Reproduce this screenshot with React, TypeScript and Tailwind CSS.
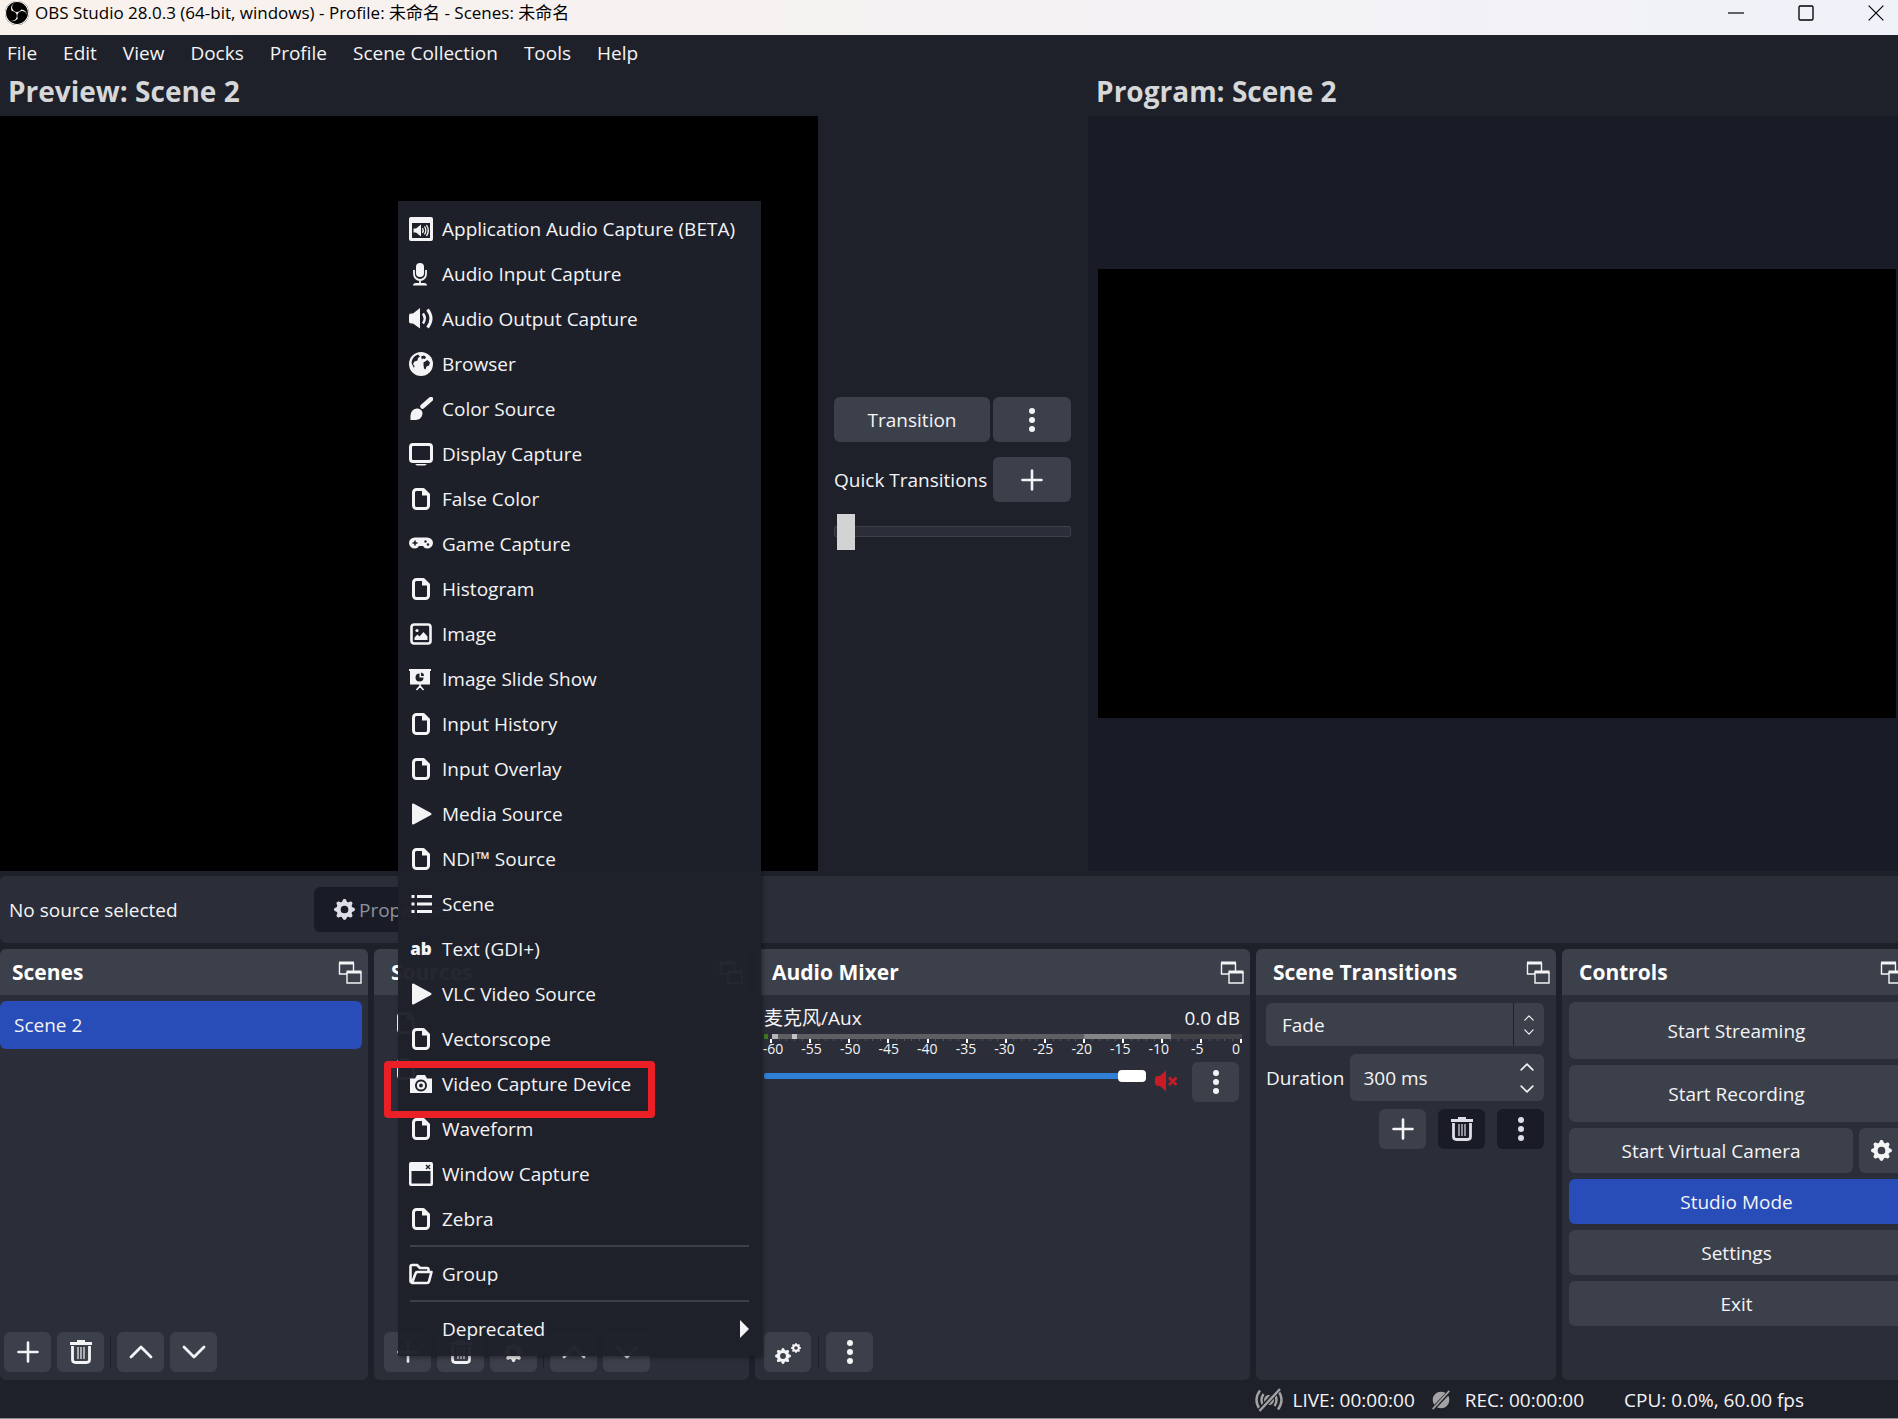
import type { ReactNode } from 'react'
import { BsGearFill } from 'react-icons/bs'
import { SiObsstudio } from 'react-icons/si'

const menus = ['File', 'Edit', 'View', 'Docks', 'Profile', 'Scene Collection', 'Tools', 'Help']

type IconProps = { children: ReactNode; className?: string }

function Icon({ children, className = 'size-6' }: IconProps) {
  return (
    <svg viewBox="0 0 24 24" className={`shrink-0 ${className}`} fill="none" stroke="currentColor" aria-hidden="true">
      {children}
    </svg>
  )
}

const FileIcon = () => (
  <Icon>
    <path d="M7.500 2.500H14.500L19.500 7.500V18.500a3 3 0 0 1-3 3H7.500a3 3 0 0 1-3-3V5.500a3 3 0 0 1 3-3z" strokeWidth="3" strokeLinejoin="round" />
    <path d="M13 2.500V8.500H20L14.500 2.500z" fill="currentColor" stroke="none" />
  </Icon>
)

const PlayIcon = () => (
  <Icon>
    <path d="M4 2.500v19L21.500 12z" fill="currentColor" strokeWidth="2" strokeLinejoin="round" />
  </Icon>
)

const AppAudioIcon = () => (
  <Icon>
    <path d="M2 0h20a2 2 0 0 1 2 2v20a2 2 0 0 1-2 2H2a2 2 0 0 1-2-2V2a2 2 0 0 1 2-2zM3 6v15h18V6z" fill="currentColor" fillRule="evenodd" stroke="none" />
    <path d="M4.500 11.500H7l5-4v12l-5-4H4.500z" fill="currentColor" stroke="none" />
    <path d="M13.500 11q1.500 2.500 0 5M15.500 9.300q2.700 4 0 8.200M17.500 8q3.500 5.500 0 11" strokeWidth="1.300" />
  </Icon>
)

const MicIcon = () => (
  <Icon>
    <rect x="7" y="1" width="8" height="14" rx="4" fill="currentColor" stroke="none" />
    <path d="M5 8v4a6 6 0 0 0 12 0V8M11 18v4" strokeWidth="1.800" />
    <path d="M4 23.500q0-2.500 3-2.500h8q3 0 3 2.500z" fill="currentColor" stroke="none" />
  </Icon>
)

const SpeakerIcon = () => (
  <Icon>
    <path d="M11 1v20.500L4 16.500H2q-2 0-2-2v-6q0-2 2-2h2z" fill="currentColor" stroke="none" />
    <path d="M14 6.500q3.500 5 0 10" strokeWidth="2.500" />
    <path d="M18.500 2.500q7 9 0 18" strokeWidth="3" />
  </Icon>
)

const GlobeIcon = () => (
  <Icon>
    <circle cx="12" cy="12" r="12" fill="currentColor" stroke="none" />
    <path d="M9 2.500q-6 2-6.500 8.500l1.500 3 1 2 .5-2-1.500-2 1.500-2.500 3-1 .5-2.500 2-1.500zM12 4.500l3-1 2 1.500-1 2-2-.5-1 1zM14.500 10.500l4-2.500 2.500 2.500-1 3-2.500 1-1 3-1.500-1-.5-3.500z" fill="#1f212a" stroke="none" />
  </Icon>
)

const BrushIcon = () => (
  <Icon>
    <path d="M22 2L13.500 9.500" strokeWidth="4.500" strokeLinecap="round" />
    <path d="M1.500 23q-.5-6 1.500-9t6-2.500q4.500 1 4.500 5-.5 6-7 6.500z" fill="currentColor" stroke="none" />
  </Icon>
)

const DisplayIcon = () => (
  <Icon>
    <rect x="1.500" y="2.500" width="21" height="17" rx="2.500" strokeWidth="3" />
    <path d="M6 22h12l-2 1.500H8z" fill="currentColor" stroke="none" />
  </Icon>
)

const GamepadIcon = () => (
  <Icon>
    <path d="M6 5.500h12a6 5.500 0 0 1 0 11q-2.500 0-4-2.500h-4q-1.500 2.500-4 2.500a6 5.500 0 0 1 0-11z" fill="currentColor" stroke="none" />
    <path d="M3.500 11h5M6 8.500v5" stroke="#1f212a" strokeWidth="1.600" />
    <circle cx="16.500" cy="9.500" r="1.200" fill="#1f212a" stroke="none" />
    <circle cx="19" cy="12.500" r="1.200" fill="#1f212a" stroke="none" />
  </Icon>
)

const ImageIcon = () => (
  <Icon>
    <rect x="2.500" y="2.500" width="19" height="19" rx="2.500" strokeWidth="2.600" />
    <circle cx="8" cy="8.500" r="1.600" fill="currentColor" stroke="none" />
    <path d="M5.500 18v-2.500l3-3 2 2 4-4.500 4 4.500V18z" fill="currentColor" stroke="none" />
  </Icon>
)

const SlidesIcon = () => (
  <Icon>
    <path d="M0 2h22v2h-1v13.500H1V4H0z" fill="currentColor" stroke="none" />
    <path d="M11 17v3M11 19l-3.500 4M11 19l3.500 4" strokeWidth="1.600" />
    <path d="M10.500 6.500v4h4a4 4 0 1 1-4-4z" fill="#1f212a" stroke="none" />
    <path d="M12 5.500a3.500 3.500 0 0 1 3 3.500h-3z" fill="#1f212a" stroke="none" />
  </Icon>
)

const ListIcon = () => (
  <Icon>
    <path d="M2.500 4.500h3M2.500 12h3M2.500 19.500h3M8 4.500h15M8 12h15M8 19.500h15" strokeWidth="3" />
  </Icon>
)

const CameraIcon = () => (
  <Icon>
    <path d="M1 6.500h5L8 3h8l2 3.500h5V21H1zM12 7.500a6 6 0 1 0 .01 0z" fill="currentColor" fillRule="evenodd" stroke="none" />
    <circle cx="12" cy="13.500" r="3" strokeWidth="2.200" />
  </Icon>
)

const WindowIcon = () => (
  <Icon>
    <path d="M2 0h20a2 2 0 0 1 2 2v20a2 2 0 0 1-2 2H2a2 2 0 0 1-2-2V2a2 2 0 0 1 2-2zM2.500 9v12.500h19V9z" fill="currentColor" fillRule="evenodd" stroke="none" />
    <path d="M17 3l4 4M21 3l-4 4" stroke="#1f212a" strokeWidth="1.400" />
  </Icon>
)

const FolderIcon = () => (
  <Icon>
    <path d="M3 20.500a1.500 1.500 0 0 1-1.500-1.500V4.500A1.500 1.500 0 0 1 3 3h5l3 3h7a1.500 1.500 0 0 1 1.500 1.500V10M3 21L6.500 11.500q.5-1.500 2-1.500H22.500L20 19.500q-.5 1.500-2 1.500z" strokeWidth="2.600" strokeLinejoin="round" />
  </Icon>
)

const PlusIcon = () => (
  <Icon>
    <path d="M12 2.500v19M2.500 12h19" strokeWidth="2.600" strokeLinecap="round" />
  </Icon>
)

const TrashIcon = () => (
  <Icon>
    <path d="M1 3.500h22M8 1.500h8" strokeWidth="2.800" />
    <path d="M3.500 6v13.500q0 3 3 3h11q3 0 3-3V6" strokeWidth="2.800" />
    <path d="M9 7v12M12 7v12M15 7v12" strokeWidth="1.200" />
  </Icon>
)

const UpIcon = ({ className }: { className?: string }) => (
  <Icon className={className}>
    <path d="M2 17L12 7l10 10" strokeWidth="2.800" strokeLinecap="round" strokeLinejoin="round" />
  </Icon>
)

const DownIcon = ({ className }: { className?: string }) => (
  <Icon className={className}>
    <path d="M2 7l10 10L22 7" strokeWidth="2.800" strokeLinecap="round" strokeLinejoin="round" />
  </Icon>
)

const DotsIcon = () => (
  <Icon>
    <g fill="currentColor" stroke="none">
      <circle cx="12" cy="3" r="3" />
      <circle cx="12" cy="12" r="3" />
      <circle cx="12" cy="21" r="3" />
    </g>
  </Icon>
)

const PopOutIcon = () => (
  <Icon>
    <path d="M1 3h15M8.500 12h15" strokeWidth="3" />
    <path d="M8.500 14H1.500V3M15.500 3v8M9 12v11h14V12" strokeWidth="1.400" />
  </Icon>
)

const GearsIcon = () => (
  <span className="flex items-center">
    <BsGearFill className="size-4 translate-y-1" />
    <BsGearFill className="size-[10px] -translate-y-1" />
  </span>
)

const MuteIcon = () => (
  <Icon>
    <path d="M12 1.500v21L6 17H4q-3 0-3-3v-4q0-3 3-3h2z" fill="currentColor" stroke="none" />
    <path d="M15 8.500l7.500 7.500M22.500 8.500L15 16" strokeWidth="2.600" />
  </Icon>
)

const LiveIcon = () => (
  <svg viewBox="0 0 28 24" className="h-6 w-7 shrink-0" fill="none" stroke="currentColor" strokeWidth="2.400" aria-hidden="true">
    <circle cx="14" cy="12" r="5" fill="currentColor" stroke="none" />
    <path d="M8.500 6q-4 6 0 12M5 2.500q-7 9.500 0 19M19.500 6q4 6 0 12M23 2.500q7 9.500 0 19" />
    <path d="M24 1L4.500 23" stroke="#1f212a" strokeWidth="5" />
    <path d="M25 1L4.500 23" />
  </svg>
)

const RecIcon = () => (
  <Icon className="size-5">
    <circle cx="12" cy="12" r="10" fill="currentColor" stroke="none" />
    <path d="M23 1L3 22" stroke="#1f212a" strokeWidth="4.500" />
    <path d="M22 1L2 23" strokeWidth="2" />
  </Icon>
)

const sources: { label: string; icon: ReactNode; marked?: boolean }[] = [
  { label: 'Application Audio Capture (BETA)', icon: <AppAudioIcon /> },
  { label: 'Audio Input Capture', icon: <MicIcon /> },
  { label: 'Audio Output Capture', icon: <SpeakerIcon /> },
  { label: 'Browser', icon: <GlobeIcon /> },
  { label: 'Color Source', icon: <BrushIcon /> },
  { label: 'Display Capture', icon: <DisplayIcon /> },
  { label: 'False Color', icon: <FileIcon /> },
  { label: 'Game Capture', icon: <GamepadIcon /> },
  { label: 'Histogram', icon: <FileIcon /> },
  { label: 'Image', icon: <ImageIcon /> },
  { label: 'Image Slide Show', icon: <SlidesIcon /> },
  { label: 'Input History', icon: <FileIcon /> },
  { label: 'Input Overlay', icon: <FileIcon /> },
  { label: 'Media Source', icon: <PlayIcon /> },
  { label: 'NDI™ Source', icon: <FileIcon /> },
  { label: 'Scene', icon: <ListIcon /> },
  { label: 'Text (GDI+)', icon: <span className="text-[17px] font-extrabold leading-6">ab</span> },
  { label: 'VLC Video Source', icon: <PlayIcon /> },
  { label: 'Vectorscope', icon: <FileIcon /> },
  { label: 'Video Capture Device', icon: <CameraIcon />, marked: true },
  { label: 'Waveform', icon: <FileIcon /> },
  { label: 'Window Capture', icon: <WindowIcon /> },
  { label: 'Zebra', icon: <FileIcon /> },
]

function MenuItem({ label, icon, marked, submenu }: { label: string; icon?: ReactNode; marked?: boolean; submenu?: boolean }) {
  return (
    <li className="relative">
      <button className="flex h-[45px] w-full items-center gap-[9px] pl-[11px] pr-3 text-left">
        <span className="flex w-6 justify-center">{icon}</span>
        <span className="flex-1 whitespace-nowrap">{label}</span>
        {submenu && (
          <svg viewBox="0 0 9 18" className="h-[18px] w-[9px]" fill="currentColor" aria-hidden="true">
            <path d="M0 0v18l9-9z" />
          </svg>
        )}
      </button>
      {marked && <span className="pointer-events-none absolute -left-[14px] top-0 z-10 h-[57px] w-[271px] rounded-sm border-[7px] border-[#eb1f26]" />}
    </li>
  )
}

function SourceMenu() {
  return (
    <ul className="absolute left-[398px] top-[201px] z-10 w-[363px] bg-[#1f212a]/97 py-[5px] text-[#f4f4f6] shadow-[2px_2px_4px_rgba(0,0,0,0.35)]">
      {sources.map((s) => (
        <MenuItem key={s.label} {...s} />
      ))}
      <li className="mx-3 my-1 h-[2px] bg-[#3c404b]" />
      <MenuItem label="Group" icon={<FolderIcon />} />
      <li className="mx-3 my-1 h-[2px] bg-[#3c404b]" />
      <MenuItem label="Deprecated" submenu />
    </ul>
  )
}

function Dock({ title, children, titleClass = 'pl-[17px]' }: { title: string; children: ReactNode; titleClass?: string }) {
  return (
    <section className="flex min-w-0 flex-col rounded-md bg-[#2b2d38]">
      <header className={`flex h-[46px] shrink-0 items-center justify-between rounded-t-md bg-[#3c404b] pr-[6px] ${titleClass}`}>
        <h2 className="text-[21px] font-bold text-white">{title}</h2>
        <button aria-label={`Undock ${title}`}>
          <PopOutIcon />
        </button>
      </header>
      {children}
    </section>
  )
}

function ToolButton({ label, children, disabled }: { label: string; children: ReactNode; disabled?: boolean }) {
  return (
    <button
      aria-label={label}
      disabled={disabled}
      className="flex h-10 w-[47px] items-center justify-center rounded-md bg-[#3c404b] disabled:bg-[#191b26] disabled:text-[#dcdde6]"
    >
      {children}
    </button>
  )
}

const Divider = () => <span className="h-8 w-px bg-[#1f212a]" />

const dbLabels = [-60, -55, -50, -45, -40, -35, -30, -25, -20, -15, -10, -5, 0]

function Meter() {
  return (
    <div className="mr-2">
      <div className="flex h-[5px]">
        <span className="w-1 bg-[#3f7a20]" />
        <span className="ml-1 w-[6px] bg-[#b4b4b6]" />
        <span className="w-[14px] bg-[#5f5f63]" />
        <span className="w-[5px] bg-[#c2c2c4]" />
        <span className="flex-[286] bg-[#5f5f63]" />
        <span className="flex-[87] bg-[#858588]" />
        <span className="flex-[71] bg-[#414147]" />
      </div>
      <div className="ml-[6px] flex h-1 justify-between">
        {Array.from({ length: 61 }, (_, i) => (
          <span key={i} className={i % 5 === 0 ? 'h-1 w-[2px] bg-white' : 'h-[2px] w-px bg-[#55565e]'} />
        ))}
      </div>
      <div className="ml-[9px] mr-[6px] flex h-3 justify-between text-sm leading-3">
        {dbLabels.map((db) => (
          <span key={db} className="flex w-0 justify-center">{db}</span>
        ))}
      </div>
    </div>
  )
}

const controlButton = 'rounded-md bg-[#3c404b] text-center'

export default function App() {
  return (
    <div className="relative flex min-h-screen flex-col overflow-hidden border-b border-[#8e8f94] bg-[#1f212a] font-['Open_Sans','Noto_Sans_CJK_SC',sans-serif] text-[19px] leading-7 text-[#f4f4f6]">
      <header className="flex h-[35px] items-start justify-between bg-linear-to-r from-[#f9f1ec] to-[#f0f2f9] text-black">
        <h1 className="flex h-[25px] items-center gap-[6px] pl-[5px] text-[17px]">
          <span className="rounded-full bg-black text-[#f9f1ec]">
            <SiObsstudio className="size-6" />
          </span>
          OBS Studio 28.0.3 (64-bit, windows) - Profile: 未命名 - Scenes: 未命名
        </h1>
        <div className="flex h-[26px] items-center gap-[54px] pr-[14px]">
          <button aria-label="Minimize">
            <Icon className="size-4"><path d="M0 12h24" strokeWidth="1.800" /></Icon>
          </button>
          <button aria-label="Maximize">
            <Icon className="size-4"><rect x="1.500" y="1.500" width="21" height="21" rx="2" strokeWidth="2" /></Icon>
          </button>
          <button aria-label="Close">
            <Icon className="size-4"><path d="M1 1l22 22M23 1L1 23" strokeWidth="1.800" /></Icon>
          </button>
        </div>
      </header>

      <nav className="flex h-9 items-center gap-[26px] pl-[7px]">
        {menus.map((m) => (
          <button key={m}>{m}</button>
        ))}
      </nav>

      <main className="grid flex-1 grid-cols-[101fr_270px_100fr]">
        <section className="flex flex-col">
          <h2 className="flex h-[45px] items-center pb-[6px] pl-2 text-[28px] font-bold text-[#d6d7d8]">Preview: Scene 2</h2>
          <div className="flex-1 bg-black" />
        </section>

        <section className="flex flex-col justify-center px-4 pb-2">
          <div className="flex flex-col gap-[15px]">
            <div className="flex gap-[3px]">
              <button className="h-[45px] w-[156px] rounded-md bg-[#3c404b]">Transition</button>
              <button aria-label="Transition options" className="flex h-[45px] w-[78px] items-center justify-center rounded-md bg-[#3c404b]">
                <DotsIcon />
              </button>
            </div>
            <div className="flex items-center gap-[3px]">
              <span className="w-[156px] whitespace-nowrap">Quick Transitions</span>
              <button aria-label="Add quick transition" className="flex h-[45px] w-[78px] items-center justify-center rounded-md bg-[#3c404b]">
                <PlusIcon />
              </button>
            </div>
          </div>
          <input
            type="range"
            aria-label="Transition position"
            defaultValue={0}
            className="mt-6 h-[11px] w-[237px] appearance-none rounded-xs border border-[#3c404b] bg-[#2b2d38] px-[2px] [&::-webkit-slider-thumb]:h-9 [&::-webkit-slider-thumb]:w-[18px] [&::-webkit-slider-thumb]:appearance-none [&::-webkit-slider-thumb]:bg-[#d2d3d3]"
          />
        </section>

        <section className="flex flex-col">
          <h2 className="flex h-[45px] items-center pb-[6px] pl-2 text-[28px] font-bold text-[#d6d7d8]">Program: Scene 2</h2>
          <div className="flex flex-1 items-center bg-[#191b26] pl-[10px] pr-[2px]">
            <div className="aspect-video w-full bg-black" />
          </div>
        </section>
      </main>

      <div className="mt-[5px] flex h-[67px] items-center rounded-l-md bg-[#2b2d38] pl-[9px]">
        <span className="w-[305px]">No source selected</span>
        <button disabled className="flex h-[45px] items-center gap-1 rounded-md bg-[#191b26] px-5 text-[#8f919c]">
          <BsGearFill className="size-[21px] text-[#dcdde6]" />
          Properties
        </button>
      </div>

      <div className="-mr-3 mt-[6px] grid h-[431px] grid-cols-[368fr_375fr_495fr_300fr_348fr] gap-[6px]">
        <Dock title="Scenes" titleClass="pl-3">
          <ul className="flex-1 pr-[6px] pt-[6px]">
            <li>
              <button className="h-12 w-full rounded-md bg-[#284cb8] pl-[14px] text-left">Scene 2</button>
            </li>
          </ul>
          <div className="flex items-center gap-[6px] pb-2 pl-1">
            <ToolButton label="Add scene"><PlusIcon /></ToolButton>
            <ToolButton label="Remove scene"><TrashIcon /></ToolButton>
            <Divider />
            <ToolButton label="Move scene up"><UpIcon /></ToolButton>
            <ToolButton label="Move scene down"><DownIcon /></ToolButton>
          </div>
        </Dock>

        <Dock title="Sources">
          <ul className="flex flex-1 flex-col gap-[22px] pl-[20px] pt-4">
            <li><FileIcon /></li>
            <li><FileIcon /></li>
          </ul>
          <div className="flex items-center gap-[6px] pb-2 pl-[10px]">
            <ToolButton label="Add source"><PlusIcon /></ToolButton>
            <ToolButton label="Remove source"><TrashIcon /></ToolButton>
            <ToolButton label="Source properties"><BsGearFill /></ToolButton>
            <Divider />
            <ToolButton label="Move source up"><UpIcon /></ToolButton>
            <ToolButton label="Move source down"><DownIcon /></ToolButton>
          </div>
        </Dock>

        <Dock title="Audio Mixer">
          <div className="flex-1 pl-[9px] pt-[9px]">
            <div className="flex justify-between pb-[2px] pr-[10px]">
              <span>麦克风/Aux</span>
              <span>0.0 dB</span>
            </div>
            <Meter />
            <div className="flex items-start pr-[11px] pt-[7px]">
              <input
                type="range"
                aria-label="麦克风/Aux volume"
                defaultValue={100}
                className="mr-2 mt-[11px] h-[6px] min-w-0 flex-1 appearance-none rounded-xs bg-[#2f7fd4] [&::-webkit-slider-thumb]:h-3 [&::-webkit-slider-thumb]:w-7 [&::-webkit-slider-thumb]:appearance-none [&::-webkit-slider-thumb]:rounded [&::-webkit-slider-thumb]:bg-white"
              />
              <button aria-label="Unmute" className="mr-[14px] mt-[7px] text-[#c81b26]"><MuteIcon /></button>
              <ToolButton label="Mixer options"><DotsIcon /></ToolButton>
            </div>
          </div>
          <div className="flex items-center gap-[7px] pb-2 pl-[9px]">
            <ToolButton label="Advanced audio properties"><GearsIcon /></ToolButton>
            <Divider />
            <ToolButton label="Audio mixer menu"><DotsIcon /></ToolButton>
          </div>
        </Dock>

        <Dock title="Scene Transitions">
          <div className="flex flex-col gap-2 pl-[10px] pr-3 pt-2">
            <div className="relative">
              <select aria-label="Transition" className="h-[43px] w-full appearance-none rounded-md bg-[#3c404b] px-4">
                <option>Fade</option>
              </select>
              <span className="pointer-events-none absolute inset-y-0 right-0 flex w-[31px] flex-col items-center justify-center gap-1 border-l border-[#1f212a]">
                <UpIcon className="size-[10px]" />
                <DownIcon className="size-[10px]" />
              </span>
            </div>
            <div className="flex items-center gap-[6px]">
              <label htmlFor="duration">Duration</label>
              <div className="flex h-[47px] min-w-0 flex-1 items-center rounded-md bg-[#3c404b] pl-[13px] pr-[10px]">
                <input id="duration" defaultValue="300 ms" className="min-w-0 flex-1 bg-transparent outline-none" />
                <span className="flex flex-col gap-2">
                  <button aria-label="Increase duration"><UpIcon className="size-[14px]" /></button>
                  <button aria-label="Decrease duration"><DownIcon className="size-[14px]" /></button>
                </span>
              </div>
            </div>
            <div className="flex justify-end gap-3">
              <ToolButton label="Add transition"><PlusIcon /></ToolButton>
              <ToolButton label="Remove transition" disabled><TrashIcon /></ToolButton>
              <ToolButton label="Transition menu" disabled><DotsIcon /></ToolButton>
            </div>
          </div>
        </Dock>

        <Dock title="Controls">
          <div className="flex flex-col gap-[6px] pl-[7px] pr-[6px] pt-[7px]">
            <button className={`h-[57px] ${controlButton}`}>Start Streaming</button>
            <button className={`h-[57px] ${controlButton}`}>Start Recording</button>
            <div className="flex gap-[6px]">
              <button className={`h-[45px] flex-1 ${controlButton}`}>Start Virtual Camera</button>
              <button aria-label="Virtual camera settings" className={`flex h-[45px] w-[45px] items-center justify-center ${controlButton}`}>
                <BsGearFill className="size-[21px]" />
              </button>
            </div>
            <button className="h-[45px] rounded-md bg-[#284cb8]">Studio Mode</button>
            <button className={`h-[45px] ${controlButton}`}>Settings</button>
            <button className={`h-[45px] ${controlButton}`}>Exit</button>
          </div>
        </Dock>
      </div>

      <footer className="flex h-[38px] items-center justify-end whitespace-nowrap pr-[94px] pt-[2px]">
        <span className="mr-[10px] text-[#a3a3a3]"><LiveIcon /></span>
        <span className="mr-4">LIVE: 00:00:00</span>
        <span className="mr-[14px] text-[#a3a3a3]"><RecIcon /></span>
        <span className="mr-10">REC: 00:00:00</span>
        <span>CPU: 0.0%, 60.00 fps</span>
      </footer>

      <SourceMenu />
    </div>
  )
}
